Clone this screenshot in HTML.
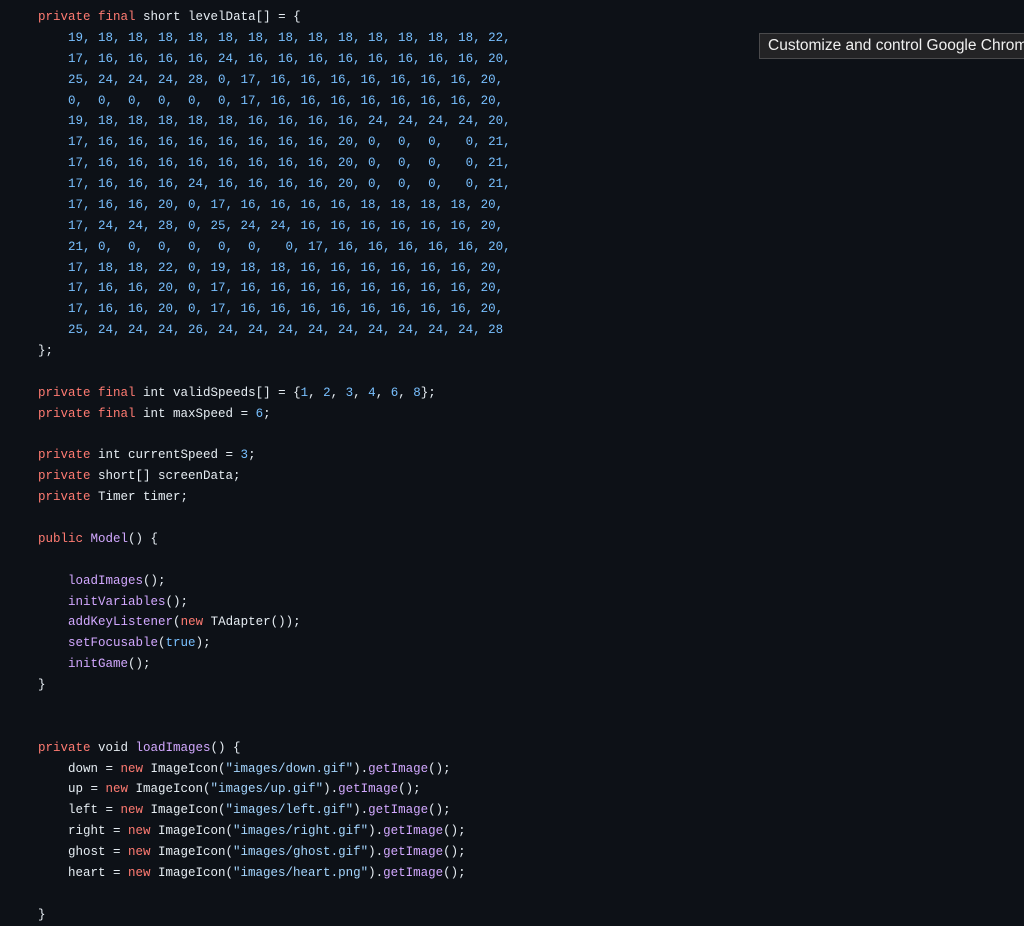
<!DOCTYPE html>
<html><head><meta charset="utf-8"><style>
html,body{margin:0;padding:0;background:#0d1117;width:1024px;height:925px;overflow:hidden}
pre{margin:0;position:absolute;left:38px;top:7px;font-family:"Liberation Mono",monospace;font-size:12.5px;line-height:20.88px;color:#e6edf3}
.k{color:#ff7b72}.n{color:#79c0ff}.f{color:#d2a8ff}.s{color:#a5d6ff}
.tip{position:absolute;left:759px;top:33px;height:26px;width:280px;background:#232325;border:1px solid #4a4a4c;box-sizing:border-box;color:#f0f0f0;font-family:"Liberation Sans",sans-serif;font-size:15.5px;line-height:24px;padding-left:8px;white-space:nowrap}
</style></head><body>
<pre><span class="k">private</span> <span class="k">final</span> short levelData[] = {
<span class="n">    19, 18, 18, 18, 18, 18, 18, 18, 18, 18, 18, 18, 18, 18, 22,
    17, 16, 16, 16, 16, 24, 16, 16, 16, 16, 16, 16, 16, 16, 20,
    25, 24, 24, 24, 28, 0, 17, 16, 16, 16, 16, 16, 16, 16, 20,
    0,  0,  0,  0,  0,  0, 17, 16, 16, 16, 16, 16, 16, 16, 20,
    19, 18, 18, 18, 18, 18, 16, 16, 16, 16, 24, 24, 24, 24, 20,
    17, 16, 16, 16, 16, 16, 16, 16, 16, 20, 0,  0,  0,   0, 21,
    17, 16, 16, 16, 16, 16, 16, 16, 16, 20, 0,  0,  0,   0, 21,
    17, 16, 16, 16, 24, 16, 16, 16, 16, 20, 0,  0,  0,   0, 21,
    17, 16, 16, 20, 0, 17, 16, 16, 16, 16, 18, 18, 18, 18, 20,
    17, 24, 24, 28, 0, 25, 24, 24, 16, 16, 16, 16, 16, 16, 20,
    21, 0,  0,  0,  0,  0,  0,   0, 17, 16, 16, 16, 16, 16, 20,
    17, 18, 18, 22, 0, 19, 18, 18, 16, 16, 16, 16, 16, 16, 20,
    17, 16, 16, 20, 0, 17, 16, 16, 16, 16, 16, 16, 16, 16, 20,
    17, 16, 16, 20, 0, 17, 16, 16, 16, 16, 16, 16, 16, 16, 20,
    25, 24, 24, 24, 26, 24, 24, 24, 24, 24, 24, 24, 24, 24, 28</span>
};

<span class="k">private</span> <span class="k">final</span> int validSpeeds[] = {<span class="n">1</span>, <span class="n">2</span>, <span class="n">3</span>, <span class="n">4</span>, <span class="n">6</span>, <span class="n">8</span>};
<span class="k">private</span> <span class="k">final</span> int maxSpeed = <span class="n">6</span>;

<span class="k">private</span> int currentSpeed = <span class="n">3</span>;
<span class="k">private</span> short[] screenData;
<span class="k">private</span> Timer timer;

<span class="k">public</span> <span class="f">Model</span>() {

    <span class="f">loadImages</span>();
    <span class="f">initVariables</span>();
    <span class="f">addKeyListener</span>(<span class="k">new</span> TAdapter());
    <span class="f">setFocusable</span>(<span class="n">true</span>);
    <span class="f">initGame</span>();
}


<span class="k">private</span> void <span class="f">loadImages</span>() {
    down = <span class="k">new</span> ImageIcon(<span class="s">"images/down.gif"</span>).<span class="f">getImage</span>();
    up = <span class="k">new</span> ImageIcon(<span class="s">"images/up.gif"</span>).<span class="f">getImage</span>();
    left = <span class="k">new</span> ImageIcon(<span class="s">"images/left.gif"</span>).<span class="f">getImage</span>();
    right = <span class="k">new</span> ImageIcon(<span class="s">"images/right.gif"</span>).<span class="f">getImage</span>();
    ghost = <span class="k">new</span> ImageIcon(<span class="s">"images/ghost.gif"</span>).<span class="f">getImage</span>();
    heart = <span class="k">new</span> ImageIcon(<span class="s">"images/heart.png"</span>).<span class="f">getImage</span>();

}</pre>
<div class="tip">Customize and control Google Chrome</div>
</body></html>
